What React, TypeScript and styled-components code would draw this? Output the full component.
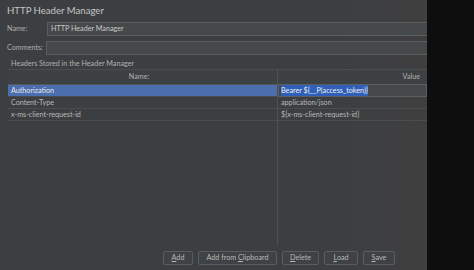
import styled, { createGlobalStyle } from "styled-components";

const GlobalStyle = createGlobalStyle`
  html, body {
    margin: 0;
    padding: 0;
    background: #0e0e0e;
  }
  #root {
    width: 474px;
    height: 270px;
    overflow: hidden;
  }
`;

type Row = {
  name: string;
  value: string;
  selected?: boolean;
};

const rows: Row[] = [
  { name: "Authorization", value: "Bearer ${__P(access_token)}", selected: true },
  { name: "Content-Type", value: "application/json" },
  { name: "x-ms-client-request-id", value: "${x-ms-client-request-id}" },
];

const App = () => {
  return (
    <>
      <GlobalStyle />
      <Screen>
        <Panel>
          <Title>HTTP Header Manager</Title>

          <FieldRow>
            <Label>Name:</Label>
            <TextField $left={47}>HTTP Header Manager</TextField>
          </FieldRow>
          <FieldRow>
            <Label>Comments:</Label>
            <TextField $left={46} />
          </FieldRow>

          <GroupTitle>Headers Stored in the Header Manager</GroupTitle>

          <Table>
            <HeaderRow>
              <HeaderCell $align="center">Name:</HeaderCell>
              <HeaderCell $align="right">Value</HeaderCell>
            </HeaderRow>
            {rows.map((row) => (
              <TableRow key={row.name}>
                <NameCell $selected={row.selected}>{row.name}</NameCell>
                {row.selected ? (
                  <EditCell>
                    <Selection>{row.value}</Selection>
                  </EditCell>
                ) : (
                  <ValueCell>{row.value}</ValueCell>
                )}
              </TableRow>
            ))}
            <Filler>
              <FillerLeft />
              <FillerRight />
            </Filler>
          </Table>

          <ButtonBar>
            <Button $width={30}>
              <u>A</u>dd
            </Button>
            <Button $width={79}>
              Add from <u>C</u>lipboard
            </Button>
            <Button $width={37}>
              <u>D</u>elete
            </Button>
            <Button $width={34}>
              <u>L</u>oad
            </Button>
            <Button $width={32}>
              <u>S</u>ave
            </Button>
          </ButtonBar>
        </Panel>
        <Side />
      </Screen>
    </>
  );
};

export default App;

const Screen = styled.div`
  display: flex;
  width: 474px;
  height: 270px;
  font-family: Lato, "Open Sans", sans-serif;
  color: #b8b8b8;
`;

const Panel = styled.div`
  width: 427px;
  height: 270px;
  display: flex;
  flex-direction: column;
  background: linear-gradient(90deg, #3c3f41 0%, #3c3f41 80%, #403f40 100%);
  overflow: hidden;
`;

const Side = styled.div`
  flex: 1;
  background: #0e0e0e;
`;

const Title = styled.div`
  height: 22px;
  padding-left: 7px;
  font-size: 9.6px;
  line-height: 22px;
  color: #c4c4c4;
  white-space: nowrap;
`;

const FieldRow = styled.div`
  display: flex;
  align-items: center;
  height: 14px;
  margin-bottom: 5px;
  position: relative;
`;

const Label = styled.div`
  position: absolute;
  left: 7px;
  font-size: 7.2px;
  line-height: 14px;
  color: #adadad;
`;

const TextField = styled.div<{ $left: number }>`
  margin-left: ${(p) => p.$left}px;
  flex: 1;
  height: 14px;
  box-sizing: border-box;
  margin-right: -4px;
  background: #45494a;
  border: 1px solid #5a5d5f;
  font-size: 7.2px;
  line-height: 12px;
  padding-left: 3px;
  color: #c8c8c8;
  white-space: nowrap;
`;

const GroupTitle = styled.div`
  height: 10px;
  margin-top: -1px;
  padding-left: 11px;
  font-size: 7.2px;
  line-height: 10px;
  color: #b0b0b0;
  white-space: nowrap;
`;

const Table = styled.div`
  margin-left: 8px;
  height: 176px;
  display: flex;
  flex-direction: column;
  border-top: 1px solid #4a4d4f;
`;

const HeaderRow = styled.div`
  display: grid;
  grid-template-columns: 270px 1fr;
  height: 14px;
  background: #3e4143;
  border-bottom: 1px solid #555859;
`;

const HeaderCell = styled.div<{ $align: "center" | "right" }>`
  font-size: 7.2px;
  line-height: 14px;
  text-align: ${(p) => p.$align};
  padding-right: 7px;
  color: #b0b0b0;
  border-right: 1px solid #4e5153;
  &:last-child {
    border-right: none;
  }
`;

const TableRow = styled.div`
  display: grid;
  grid-template-columns: 270px 1fr;
  height: 11px;
  border-bottom: 1px solid #4a4d4f;
`;

const NameCell = styled.div<{ $selected?: boolean }>`
  background: ${(p) => (p.$selected ? "#4b6eaf" : "transparent")};
  color: ${(p) => (p.$selected ? "#e8e8e8" : "#b8b8b8")};
  font-size: 7.2px;
  line-height: 11px;
  padding-left: 3px;
  border-right: 1px solid #4e5153;
  white-space: nowrap;
`;

const ValueCell = styled.div`
  font-size: 7.2px;
  line-height: 11px;
  padding-left: 3px;
  white-space: nowrap;
`;

const EditCell = styled.div`
  background: #45494a;
  border: 1px solid #5c5f61;
  margin: -1px 0 -1px 0;
  font-size: 7.2px;
  line-height: 11px;
  padding-left: 2px;
  white-space: nowrap;
`;

const Selection = styled.span`
  background: #2f5fb8;
  color: #f0f0f0;
  padding: 1px 0;
`;

const Filler = styled.div`
  flex: 1;
  display: grid;
  grid-template-columns: 270px 1fr;
`;

const FillerLeft = styled.div`
  border-right: 1px solid #4e5153;
`;

const FillerRight = styled.div``;

const ButtonBar = styled.div`
  display: flex;
  gap: 5px;
  padding-left: 163px;
  margin-top: 5px;
`;

const Button = styled.div<{ $width: number }>`
  width: ${(p) => p.$width}px;
  height: 14px;
  box-sizing: border-box;
  border: 1px solid #5a5d5f;
  border-radius: 2px;
  background: #3e4244;
  font-size: 7.2px;
  line-height: 12px;
  text-align: center;
  color: #b8b8b8;
  white-space: nowrap;
  u {
    text-decoration-thickness: 0.5px;
    text-underline-offset: 1px;
  }
`;
